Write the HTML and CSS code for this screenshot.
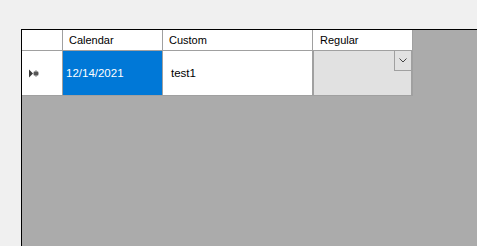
FILE: index.html
```html
<!DOCTYPE html>
<html>
<head>
    <link rel="stylesheet" href="styles.css">
</head>
<body>
    <div class="grid">
        <div class="row header-row">
            <div class="cell row-head"></div>
            <div class="cell col-cal">Calendar</div>
            <div class="cell col-custom">Custom</div>
            <div class="cell col-regular">Regular</div>
        </div>
        <div class="row data-row">
            <div class="cell row-head">
                <svg width="10" height="9" viewBox="0 0 10 9">
                    <path d="M0 0.5 L4 4.5 L0 8.5 Z" fill="#3a3a3a"/>
                    <path d="M7 1.5 V7.5 M4.8 2.8 L9.2 6.2 M9.2 2.8 L4.8 6.2 M4.5 4.5 H9.5" stroke="#555" stroke-width="1.3"/>
                </svg>
            </div>
            <div class="cell col-cal selected">12/14/2021</div>
            <div class="cell col-custom custom-value">test1</div>
            <div class="cell col-regular combo">
                <div class="combo-btn">
                    <svg width="8" height="5" viewBox="0 0 8 5">
                        <path d="M0.5 0.5 L4 4 L7.5 0.5" fill="none" stroke="#444" stroke-width="1"/>
                    </svg>
                </div>
            </div>
        </div>
    </div>
</body>
</html>
```

FILE: styles.css
```css
body {
    margin: 0;
    padding: 29px 0 0 21px;
    background: #f0f0f0;
    font-family: 'Liberation Sans', Arial, sans-serif;
    font-size: 11px;
    overflow: hidden;
}

.grid {
    width: 455px;
    height: 216px;
    background: #ababab;
    border-left: 1px solid #000;
    border-top: 1px solid #000;
}

.row {
    display: flex;
}

.cell {
    box-sizing: border-box;
    border-right: 1px solid #a0a0a0;
    border-bottom: 1px solid #a0a0a0;
    background: #fff;
    display: flex;
    align-items: center;
    color: #000;
}

.header-row .cell {
    height: 21px;
    padding-left: 6px;
}

.data-row .cell {
    height: 45px;
    font-size: 11.5px;
}

.row-head {
    width: 41px;
}

.data-row .row-head {
    padding-left: 7px;
}

.col-cal {
    width: 100px;
}

.col-custom {
    width: 150px;
}

.col-regular {
    width: 100px;
}

.selected {
    background: #0078d7;
    color: #fff;
    padding-left: 3px;
}

.custom-value {
    padding-left: 8px;
}

.combo {
    background: #e1e1e1;
    border-left: 1px solid #a0a0a0;
    border-right: 2px solid #a0a0a0;
    align-items: flex-start;
    justify-content: flex-end;
}

.header-row .col-regular {
    padding-left: 7px;
}

.combo-btn {
    width: 17px;
    height: 20px;
    box-sizing: border-box;
    border-left: 1px solid #a0a0a0;
    border-bottom: 1px solid #a0a0a0;
    display: flex;
    align-items: center;
    justify-content: center;
}
```
